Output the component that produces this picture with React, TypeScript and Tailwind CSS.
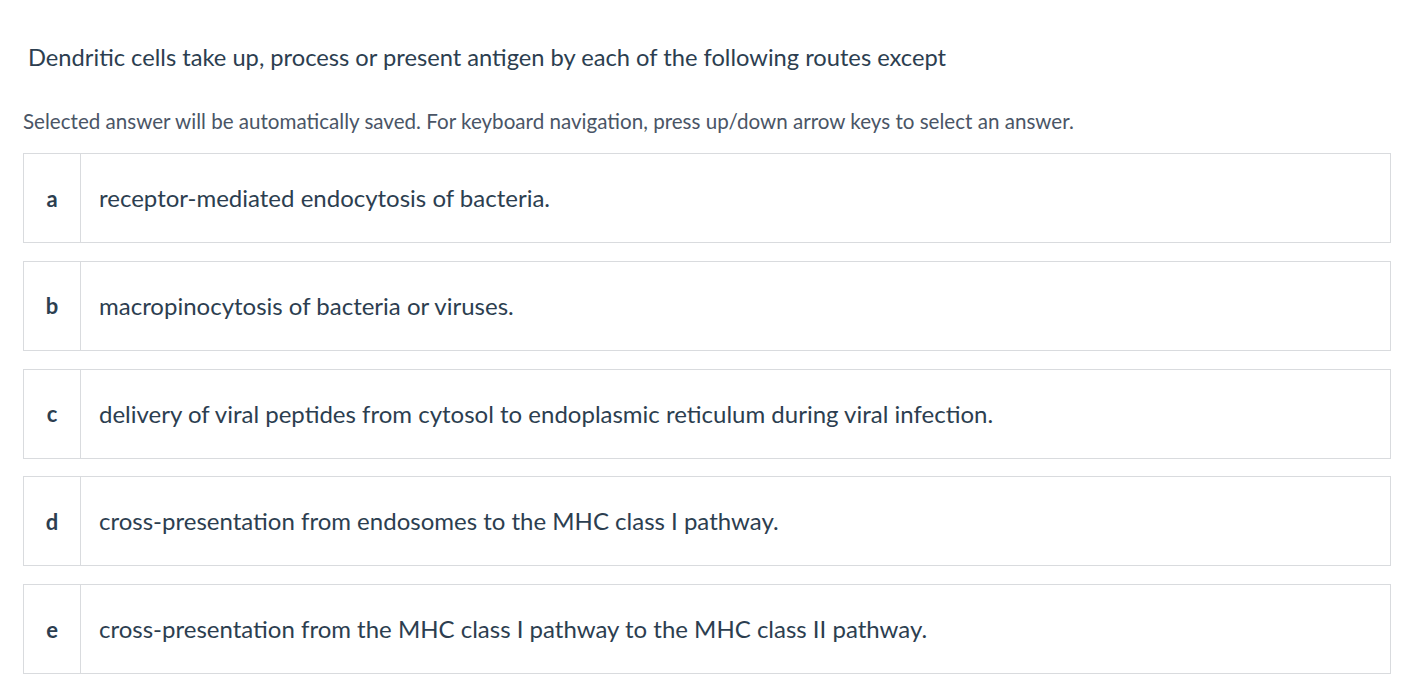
const options = [
  { key: 'a', text: 'receptor-mediated endocytosis of bacteria.' },
  { key: 'b', text: 'macropinocytosis of bacteria or viruses.' },
  { key: 'c', text: 'delivery of viral peptides from cytosol to endoplasmic reticulum during viral infection.' },
  { key: 'd', text: 'cross-presentation from endosomes to the MHC class I pathway.' },
  { key: 'e', text: 'cross-presentation from the MHC class I pathway to the MHC class II pathway.' },
]

export default function App() {
  return (
    <div className="min-h-screen bg-white text-[#2c3e50] [font-family:Lato,'Noto_Sans',sans-serif]">
      <div className="px-[23px] pt-[40px]">
        <h1 className="pl-[5px] text-[23.7px] leading-[34px] font-normal">
          Dendritic cells take up, process or present antigen by each of the following routes except
        </h1>
        <p className="mt-[34px] text-[20.6px] leading-[26px] text-[#4a5566]">
          Selected answer will be automatically saved. For keyboard navigation, press up/down arrow keys to select an answer.
        </p>
        <ul className="mt-[19px] flex w-[1368px] flex-col gap-[17.75px]">
          {options.map((o) => (
            <li key={o.key} className="flex h-[90px] border border-[#d9dbde]">
              <div className="flex w-[57px] items-center justify-center border-r border-[#d9dbde] text-[22px] font-bold">
                {o.key}
              </div>
              <div className="flex items-center pl-[18px] text-[24px]">{o.text}</div>
            </li>
          ))}
        </ul>
      </div>
    </div>
  )
}
